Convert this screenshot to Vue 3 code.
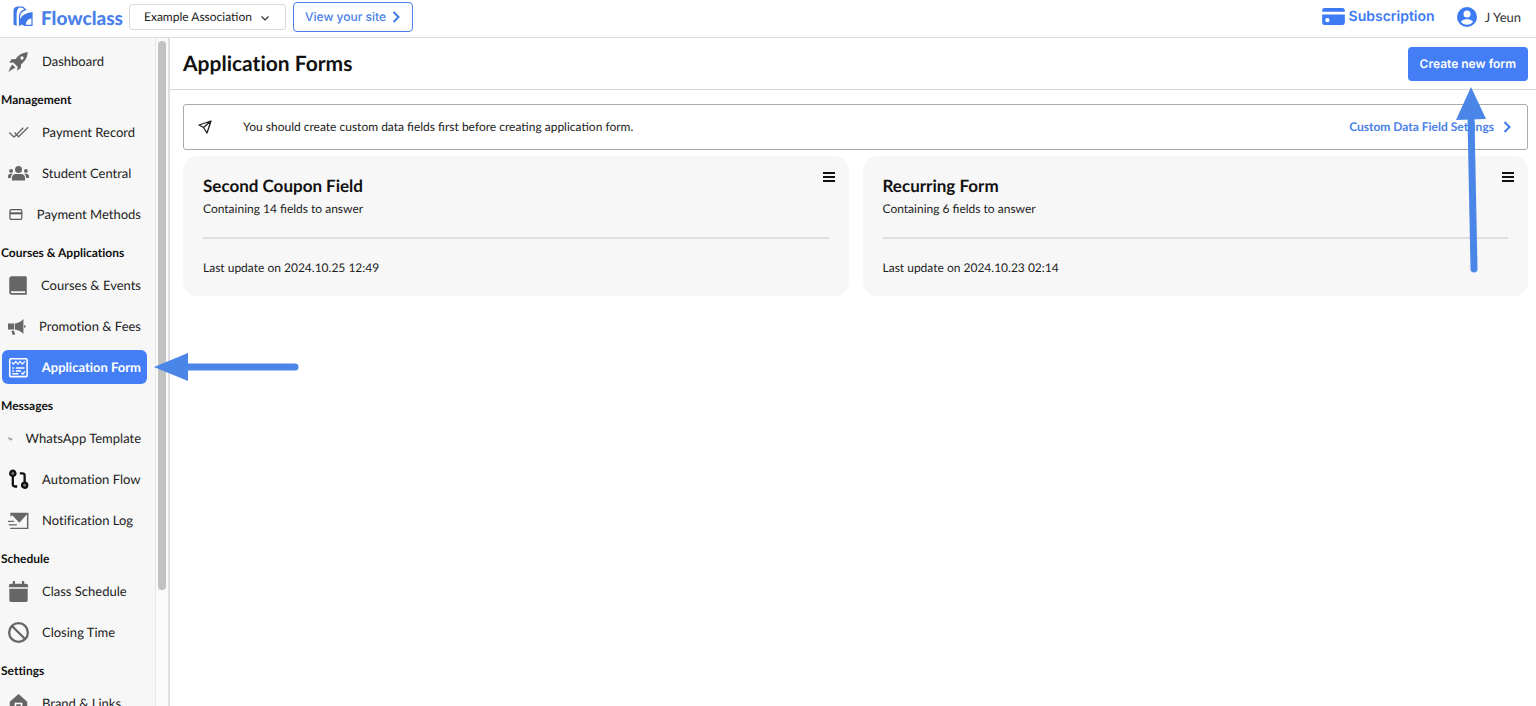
<script setup>
import { ref } from 'vue'

const association = ref('Example Association')

const groups = [
  { title: '', items: [{ label: 'Dashboard', icon: 'rocket' }] },
  {
    title: 'Management',
    items: [
      { label: 'Payment Record', icon: 'checks' },
      { label: 'Student Central', icon: 'users' },
      { label: 'Payment Methods', icon: 'card' },
    ],
  },
  {
    title: 'Courses & Applications',
    items: [
      { label: 'Courses & Events', icon: 'book' },
      { label: 'Promotion & Fees', icon: 'megaphone' },
      { label: 'Application Form', icon: 'form', active: true },
    ],
  },
  {
    title: 'Messages',
    items: [
      { label: 'WhatsApp Template', icon: 'chat' },
      { label: 'Automation Flow', icon: 'flow' },
      { label: 'Notification Log', icon: 'mail' },
    ],
  },
  {
    title: 'Schedule',
    items: [
      { label: 'Class Schedule', icon: 'calendar' },
      { label: 'Closing Time', icon: 'ban' },
    ],
  },
  { title: 'Settings', items: [{ label: 'Brand & Links', icon: 'home' }] },
]

const forms = [
  { name: 'Second Coupon Field', fields: 14, updated: '2024.10.25 12:49' },
  { name: 'Recurring Form', fields: 6, updated: '2024.10.23 02:14' },
]
</script>

<template>
  <div class="app">
    <header class="topbar">
      <a class="brand" href="#">
        <svg class="brand-mark" viewBox="0 0 20 21" aria-hidden="true">
          <path d="M.5 18.500V4.500Q.8.800 4.500.700L5.500 2Q3.600 4 3.600 7.500V20Z" fill="#3f78ea" />
          <path d="M4 1.200H9.800L12.600 3.600Q7 5 6.500 10.500V19.500" fill="none" stroke="#3f78ea" stroke-width="1.200" />
          <path d="M6.500 20V14.500Q8 7.500 19.600 6V20H11.500L8.800 18.500Z" fill="#3f78ea" />
          <path d="M12.800 18.800Q13 13.500 18.400 12.200V18.800Z" fill="#fff" />
        </svg>
        <span>Flowclass</span>
      </a>
      <div class="picker">
        <select v-model="association" aria-label="Association">
          <option>Example Association</option>
        </select>
        <svg viewBox="0 0 10 10" aria-hidden="true"><path d="M1.500 3.500L5 7L8.500 3.500" /></svg>
      </div>
      <a class="visit" href="#">
        <span>View your site</span>
        <svg class="chevron" viewBox="0 0 8 12" aria-hidden="true"><path d="M1.500 1L6.500 6L1.500 11" /></svg>
      </a>
      <a class="subscription" href="#">
        <svg viewBox="0 0 24 18" aria-hidden="true">
          <path d="M2.500 0H21.500Q24 0 24 2.500V4H0V2.500Q0 0 2.500 0ZM0 7H24V15.500Q24 18 21.500 18H2.500Q0 18 0 15.500Z" fill="#3d7bf5" />
          <circle cx="5.500" cy="12.800" r="2.300" fill="#fff" />
        </svg>
        <span>Subscription</span>
      </a>
      <button class="user" type="button">
        <svg viewBox="0 0 20 20" aria-hidden="true">
          <circle cx="10" cy="10" r="10" fill="#3d7bf5" />
          <circle cx="10" cy="7" r="3.500" fill="#fff" />
          <path d="M3.800 14.600Q6.500 12 10 12T16.200 14.600Q13.800 17.800 10 17.800T3.800 14.600Z" fill="#fff" />
        </svg>
        <span>J Yeun</span>
      </button>
    </header>

    <div class="body">
      <aside class="sidebar">
        <nav class="menu" aria-label="Main">
          <section v-for="group in groups" :key="group.title" class="group">
            <h2 v-if="group.title">{{ group.title }}</h2>
            <a
              v-for="item in group.items"
              :key="item.label"
              class="item"
              :class="{ active: item.active }"
              :aria-current="item.active ? 'page' : undefined"
              href="#"
            >
              <svg class="icon" viewBox="0 0 24 24" aria-hidden="true">
                <g v-if="item.icon === 'rocket'" fill="#666">
                  <path d="M22.500 1C16 2 12 4.500 9 9L4 9.500L1.500 13.500L6 13L11 18L10.500 22.500L14.500 19.500L15 15C19 12 22 8 22.500 1Z" />
                  <circle cx="16" cy="8" r="1.900" fill="#f7f7f7" />
                  <path d="M5 15.500L8.500 19L4.500 21L.5 24L2.500 19Z" />
                </g>
                <path v-else-if="item.icon === 'checks'" d="M1.500 12L7 17.500M7.500 12L12 16.800L23 6M6.800 17.500L17.500 6.500" fill="none" stroke="#666" stroke-width="1.500" />
                <g v-else-if="item.icon === 'users'" fill="#666">
                  <circle cx="12" cy="7.500" r="4" />
                  <path d="M4.500 20V18Q4.500 12.700 9 12.700H15Q19.500 12.700 19.500 18V20Z" />
                  <circle cx="3.500" cy="9" r="2.200" />
                  <circle cx="20.500" cy="9" r="2.200" />
                  <path d="M0 16Q0 12.200 3 12.200H5.500Q3.200 14 3.200 17H0ZM24 16Q24 12.200 21 12.200H18.500Q20.800 14 20.800 17H24Z" />
                </g>
                <g v-else-if="item.icon === 'card'" fill="none" stroke="#555" stroke-width="1.800">
                  <rect x="3" y="4.500" width="18" height="15" rx="2" />
                  <path d="M3 10.200H21" stroke-width="3" />
                </g>
                <g v-else-if="item.icon === 'book'">
                  <path d="M4.500 1H21Q22.500 1 22.500 2.500V23H4.500Q1.500 23 1.500 20V4Q1.500 1 4.500 1Z" fill="#666" />
                  <path d="M4.500 18.800H20.500V21H4.500Q3.500 21 3.500 19.900T4.500 18.800Z" fill="#f7f7f7" />
                </g>
                <g v-else-if="item.icon === 'megaphone'" fill="#666">
                  <path d="M0 8H8V16H0ZM9 8Q16 7 20.500 2V22Q16 17 9 16Z" />
                  <path d="M4.500 17.500H8L9.500 23H6Z" />
                  <path d="M21.500 10Q23.500 10.300 23.500 12T21.500 14Z" />
                </g>
                <g v-else-if="item.icon === 'form'" fill="none" stroke="#fff" stroke-width="1.800">
                  <rect x="2" y="2" width="20" height="20.500" rx="1" />
                  <path d="M4.500 6L6.500 8L9 5L11.500 8L14 5L16.500 8L19.500 5" stroke-width="1.400" />
                  <path d="M5 12.500H7M9 12.500H19M5 16H7M9 16H15M5 19.200H12M15.500 18L17 19.500L19.500 16.500" stroke-width="1.700" />
                </g>
                <path v-else-if="item.icon === 'chat'" d="M4 6L12 10L21 12V20H8V14H3Z" fill="#bbb" stroke="#888" stroke-width="2" />
                <g v-else-if="item.icon === 'flow'" fill="none" stroke="#111" stroke-width="2.600">
                  <circle cx="5.500" cy="5" r="3" fill="#777" />
                  <circle cx="19" cy="18.500" r="3" fill="#777" />
                  <path d="M5.500 8.500V17.500Q5.500 20 8 20H10.500M19 15V7.500Q19 5 16.500 5H13.500" />
                </g>
                <g v-else-if="item.icon === 'mail'" stroke="#666">
                  <path d="M3.500 7V4H22.500V21H2.500" fill="none" stroke-width="1.700" />
                  <path d="M3.500 4H22L13 14Z" fill="#666" />
                  <path d="M0 13H7M1 17H10" stroke-width="1.700" />
                </g>
                <g v-else-if="item.icon === 'calendar'" fill="#666">
                  <path d="M5.500 0H8V3H16V0H18.500V3H20.500Q23 3 23 5.500V7H1V5.500Q1 3 3.500 3H5.500Z" />
                  <path d="M1.500 8.800H22.500V22Q22.500 24 20.500 24H3.500Q1.500 24 1.500 22Z" />
                </g>
                <g v-else-if="item.icon === 'ban'" fill="none" stroke="#666" stroke-width="2.600">
                  <circle cx="12" cy="12" r="10.700" />
                  <path d="M4.500 4.500L19.500 19.500" />
                </g>
                <g v-else-if="item.icon === 'home'">
                  <path d="M12 1L22 10V24H2V10Z" fill="#666" />
                  <rect x="8.500" y="12" width="7" height="6" fill="none" stroke="#fff" stroke-width="1.800" />
                </g>
              </svg>
              <span>{{ item.label }}</span>
            </a>
          </section>
        </nav>
        <div class="track" aria-hidden="true"><div class="thumb"></div></div>
      </aside>

      <main class="content">
        <div class="page-head">
          <h1>Application Forms</h1>
          <button class="create" type="button">Create new form</button>
        </div>
        <div class="page-body">
          <div class="notice">
            <svg class="plane" viewBox="0 0 14 14" aria-hidden="true">
              <path d="M13 1L1 5L5.500 7.500L9 13ZM5.500 7.500L13 1" />
            </svg>
            <p>You should create custom data fields first before creating application form.</p>
            <a href="#">
              <span>Custom Data Field Settings</span>
              <svg class="chevron" viewBox="0 0 8 12" aria-hidden="true"><path d="M1.500 1L6.500 6L1.500 11" /></svg>
            </a>
          </div>
          <div class="cards">
            <article v-for="form in forms" :key="form.name" class="card">
              <div class="card-head">
                <h3>{{ form.name }}</h3>
                <button type="button" :aria-label="`Options for ${form.name}`">
                  <svg viewBox="0 0 12 10" aria-hidden="true"><path d="M0 1H12M0 5H12M0 9H12" /></svg>
                </button>
              </div>
              <p class="count">Containing {{ form.fields }} fields to answer</p>
              <hr />
              <p>Last update on {{ form.updated }}</p>
            </article>
          </div>
        </div>
      </main>
    </div>

    <svg class="pointer pointer-menu" viewBox="0 0 146 28" aria-hidden="true">
      <path d="M0 14L34 0V28Z" fill="#4a86e8" />
      <path d="M33 14H141" stroke="#4a86e8" stroke-width="7" stroke-linecap="round" />
    </svg>
    <svg class="pointer pointer-create" viewBox="0 0 30 186" aria-hidden="true">
      <path d="M15 0L30 32L0 33Z" fill="#4a86e8" />
      <path d="M15 31L18 182" stroke="#4a86e8" stroke-width="7" stroke-linecap="round" />
    </svg>
  </div>
</template>

<style>
body {
  margin: 0;
}
</style>

<style scoped>
.app {
  position: relative;
  display: flex;
  flex-direction: column;
  height: 100vh;
  overflow: hidden;
  background: #fff;
  color: #1c1c1c;
  font-family: Lato, "Open Sans", sans-serif;
  font-size: 12px;
  line-height: 16px;
  text-rendering: geometricPrecision;
}
.app *,
.app {
  box-sizing: border-box;
}
a {
  color: inherit;
  text-decoration: none;
}
button {
  font: inherit;
  color: inherit;
  border: 0;
  padding: 0;
  background: none;
  cursor: pointer;
  text-rendering: inherit;
}
h1, h2, h3, p {
  margin: 0;
}
svg {
  display: block;
}
.chevron {
  width: 8px;
  height: 12px;
  fill: none;
  stroke: #3d7be8;
  stroke-width: 2;
}

.topbar {
  display: flex;
  align-items: center;
  flex: none;
  height: 38px;
  padding: 0 15px 4px 13px;
  border-bottom: 1px solid #dcdcdc;
}
.brand {
  display: flex;
  align-items: center;
  gap: 8px;
  width: 116px;
  color: #4a80e8;
  font-size: 19px;
  line-height: 24px;
  font-weight: 900;
}
.brand span {
  padding-top: 4px;
}
.brand-mark {
  width: 20px;
  height: 21px;
}
.picker {
  position: relative;
}
.picker select {
  appearance: none;
  height: 26px;
  padding: 0 32px 0 14px;
  border: 1px solid #d9d9d9;
  border-radius: 3px;
  background: #fff;
  color: #1c1c1c;
  font: inherit;
  text-rendering: inherit;
}
.picker svg {
  position: absolute;
  right: 16px;
  top: 9px;
  width: 10px;
  height: 10px;
  fill: none;
  stroke: #333;
  stroke-width: 1.2;
  pointer-events: none;
}
.visit {
  display: flex;
  align-items: center;
  gap: 6px;
  height: 30px;
  margin-left: 7px;
  padding: 0 12px 0 11px;
  border: 1px solid #4a80e8;
  border-radius: 4px;
  color: #4a80e8;
  font-family: Inter, sans-serif;
  font-size: 12px;
  font-weight: 500;
}
.subscription {
  display: flex;
  align-items: center;
  gap: 4px;
  margin-left: auto;
  color: #3d7bf5;
  font-family: Inter, sans-serif;
  font-size: 14px;
  font-weight: 600;
}
.subscription svg {
  width: 23px;
  height: 17px;
}
.user {
  display: flex;
  align-items: center;
  gap: 8px;
  margin-left: 22px;
  font-size: 13px;
  color: #333;
}
.user svg {
  width: 20px;
  height: 20px;
}

.body {
  display: flex;
  flex: 1;
  min-height: 0;
}
.sidebar {
  display: flex;
  flex: none;
  width: 170px;
  border-right: 2px solid #e0e0e0;
  background: #f7f7f7;
  font-variant-ligatures: no-common-ligatures;
}
.menu {
  flex: 1;
  overflow: hidden;
  padding-top: 6px;
}
.group {
  display: flex;
  flex-direction: column;
  gap: 7px;
  margin-bottom: 14px;
}
.group h2 {
  padding-left: 1px;
  font-size: 12px;
  line-height: 16px;
  font-weight: 700;
  color: #111;
}
.item {
  display: flex;
  align-items: center;
  gap: 13px;
  height: 34px;
  margin: 0 8px 0 2px;
  padding: 0 6px;
  border-radius: 6px;
  font-size: 13px;
  white-space: nowrap;
}
.item span {
  flex: none;
}
.icon {
  flex: 0 1 21px;
  min-width: 0;
  height: 21px;
}
.item.active {
  background: #437ef7;
  color: #fff;
  font-weight: 700;
}
.track {
  flex: none;
  width: 13px;
  padding: 3px 2px;
  border-left: 1px solid #e8e8e8;
  background: #fafafa;
}
.thumb {
  width: 8px;
  height: 83%;
  border-radius: 4px;
  background: #c2c2c2;
}

.content {
  flex: 1;
  min-width: 0;
}
.page-head {
  display: flex;
  align-items: center;
  justify-content: space-between;
  height: 52px;
  padding: 0 8px 0 13px;
  border-bottom: 1px solid #d6d6d6;
}
h1 {
  font-size: 21px;
  line-height: 26px;
  font-weight: 700;
  color: #111;
  font-variant-ligatures: no-common-ligatures;
}
.create {
  height: 34px;
  padding: 0 12px;
  border-radius: 4px;
  background: #437ef7;
  color: #fff;
  font-family: Inter, sans-serif;
  font-size: 12px;
  font-weight: 600;
}
.page-body {
  display: flex;
  flex-direction: column;
  gap: 6px;
  padding: 14px 8px 0 13px;
}
.notice {
  display: flex;
  align-items: center;
  height: 46px;
  padding: 0 16px 0 14px;
  border: 1px solid #aaa;
  border-radius: 3px;
}
.plane {
  width: 14px;
  height: 14px;
  margin-right: 31px;
  fill: none;
  stroke: #222;
  stroke-width: 1.3;
  stroke-linejoin: round;
}
.notice a {
  display: flex;
  align-items: center;
  gap: 9px;
  margin-left: auto;
  color: #4a80e8;
  font-weight: 700;
  font-variant-ligatures: no-common-ligatures;
}
.cards {
  display: grid;
  grid-template-columns: 1fr 1fr;
  gap: 14px;
}
.card {
  padding: 14px 20px 20px;
  border-radius: 14px;
  background: #f7f7f7;
}
.card-head {
  display: flex;
  align-items: flex-start;
  justify-content: space-between;
  margin-right: -6px;
}
h3 {
  padding-top: 4px;
  font-size: 17px;
  line-height: 24px;
  font-weight: 700;
  color: #111;
}
.card-head svg {
  width: 12px;
  height: 10px;
  margin-top: 2px;
  fill: none;
  stroke: #111;
  stroke-width: 2;
}
.count {
  padding-top: 3px;
}
hr {
  height: 2px;
  margin: 20px 0 21px;
  border: 0;
  background: #dedede;
}
.pointer {
  position: absolute;
  pointer-events: none;
}
.pointer-menu {
  left: 154px;
  top: 353px;
  width: 146px;
  height: 28px;
}
.pointer-create {
  right: 50px;
  top: 87px;
  width: 30px;
  height: 186px;
}
</style>
